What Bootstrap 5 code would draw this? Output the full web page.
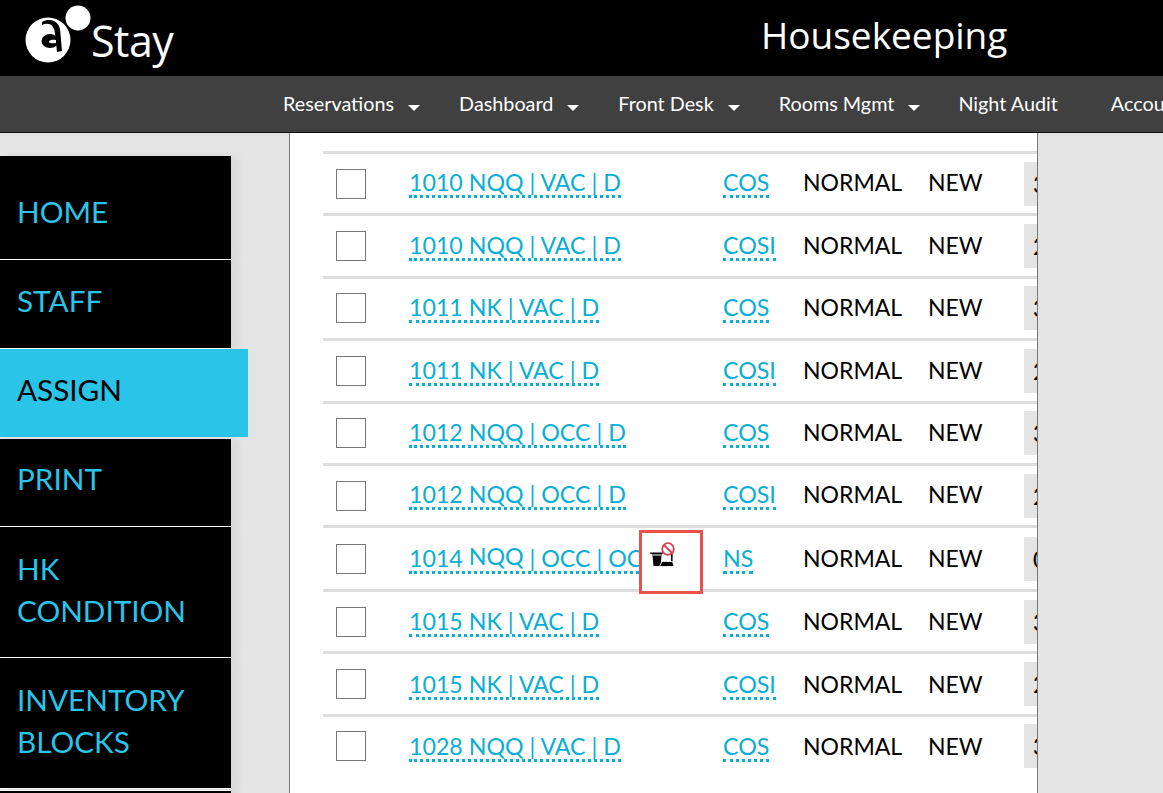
<!DOCTYPE html>
<html lang="en"><head><meta charset="utf-8"><title>Housekeeping</title>
<link href="https://cdn.jsdelivr.net/npm/bootstrap@5.3.0/dist/css/bootstrap.min.css" rel="stylesheet">
<style>
html,body{height:793px;overflow:hidden}
body{background:#e4e4e4;font-family:Lato,"Liberation Sans",sans-serif;color:#000}
.top-strip{height:76px;background:#000;color:#fff}
.logo-box{width:283px;padding:5px 0 0 25px}
.logo-name{font-family:"Open Sans",sans-serif;font-size:43px;line-height:1;margin:14px 0 0 0;letter-spacing:-.5px}
.page-name{font-family:"Open Sans",sans-serif;font-size:37px;line-height:1;margin:0 0 0 478px;padding-top:16px}
.menu-strip{height:57px;background:#404040;border-bottom:1px solid #111;padding:0 0 0 283px;overflow:hidden}
.menu-entry{color:#fff;font-size:19.800px;white-space:nowrap;text-decoration:none}
.menu-caret{display:inline-block;border-top:6px solid #fff;border-left:6px solid transparent;border-right:6px solid transparent;margin-left:14px;vertical-align:0}
.ms-menu-a{margin-left:39px}.ms-menu-b{margin-left:39px}.ms-menu-c{margin-left:39px}.ms-menu-d{margin-left:38px}.ms-menu-e{margin-left:53px}
.work-area{height:660px;overflow:hidden}
.side-col{width:248px;padding-top:23px;flex:none}
.side-item{display:block;width:231px;background:#000;color:#29c4e8;font-size:29.700px;line-height:42px;padding:0 17px;text-decoration:none;border-bottom:1px solid #fff}
.side-one{height:104px;padding-top:35px}
.side-two{height:89px;padding-top:20px}
.side-tall{height:131px;padding-top:20.500px}
.side-print{height:88px;padding-top:19px}
.side-active{width:248px;background:#29c4e8;color:#000;height:88px;padding-top:20px;border-bottom:0;margin:0 0 2px}
.side-shadow{box-shadow:7px 0 7px rgba(0,0,0,.05)}
.side-rest{height:60px;border-top:1px solid #fff;border-bottom:0;margin-top:1px}
.sheet{width:749px;margin-left:41px;background:#fff;border-left:1px solid #777;border-right:1px solid #777;padding:18px 0 0 33px;overflow:hidden;flex:none}
.hk-row{height:62.4px;border-top:3px solid #ddd;font-size:23px;white-space:nowrap;position:relative;padding-bottom:2px}
.hk-row.hk-wide{height:63.6px}
.hk-check{width:30px;height:30px;border:1px solid #777;background:#fff;margin:2px 0 0 13px;flex:none}
.hk-room{width:314px;margin-left:43px;flex:none}
.hk-svc{width:80px;flex:none}
.hk-link{font-size:23.200px;color:#08aed3;text-decoration:none;border-bottom:3px dotted #08aed3;line-height:26px;display:inline-block}
.hk-lift{vertical-align:2px}
.hk-pri{width:125px;flex:none}
.hk-state{width:96px;flex:none}
.hk-num{background:#e4e4e4;width:60px;height:44px;line-height:44px;padding-left:9px;flex:none;margin-top:2px}
.hk-low{padding-bottom:0}
.hk-low .hk-check,.hk-low .hk-num{margin-top:0}
.flag-box{position:absolute;left:316px;top:2px;width:64px;height:64px;border:3px solid #e9524a;background:#fff;z-index:2}
.flag-box svg{position:absolute;left:6px;top:8px}
</style></head>
<body>
<header class="top-strip d-flex">
  <div class="logo-box d-flex">
    <svg width="66" height="60" viewBox="0 0 66 60"><circle cx="23" cy="35" r="22.500" fill="#fff"/><circle cx="53" cy="13" r="12.500" fill="#fff"/><path d="M17 17C24 13 33 15 35 24L37 46 32 47 30 28C29 20 24 17 17 20z" fill="#000"/><ellipse cx="25" cy="36" rx="8.500" ry="7" fill="#000"/><path d="M24 36c2-1.500 5-1.500 7-1v3c-2 .5-5 .5-7-.5z" fill="#fff"/></svg>
    <div class="logo-name">Stay</div>
  </div>
  <h1 class="page-name fw-normal">Housekeeping</h1>
</header>
<nav class="menu-strip d-flex align-items-center">
  <a class="menu-entry" href="#">Reservations<span class="menu-caret"></span></a>
  <a class="menu-entry ms-menu-a" href="#">Dashboard<span class="menu-caret"></span></a>
  <a class="menu-entry ms-menu-b" href="#">Front Desk<span class="menu-caret"></span></a>
  <a class="menu-entry ms-menu-c" href="#">Rooms Mgmt<span class="menu-caret"></span></a>
  <a class="menu-entry ms-menu-d" href="#">Night Audit</a>
  <a class="menu-entry ms-menu-e" href="#">Accounting</a>
</nav>
<main class="work-area d-flex">
  <aside class="side-col">
    <a class="side-item side-shadow side-one" href="#">HOME</a>
    <a class="side-item side-shadow side-two" href="#">STAFF</a>
    <a class="side-item side-active" href="#">ASSIGN</a>
    <a class="side-item side-shadow side-print" href="#">PRINT</a>
    <a class="side-item side-shadow side-tall" href="#">HK CONDITION</a>
    <a class="side-item side-shadow side-tall" href="#">INVENTORY BLOCKS</a>
    <div class="side-item side-shadow side-rest"></div>
  </aside>
  <section class="sheet">
    <div class="hk-row d-flex align-items-center"><div class="hk-check"></div><div class="hk-room"><a class="hk-link" href="#">1010 NQQ | VAC | D</a></div><div class="hk-svc"><a class="hk-link" href="#">COS</a></div><div class="hk-pri">NORMAL</div><div class="hk-state">NEW</div><div class="hk-num">3</div></div>
    <div class="hk-row d-flex align-items-center"><div class="hk-check"></div><div class="hk-room"><a class="hk-link" href="#">1010 NQQ | VAC | D</a></div><div class="hk-svc"><a class="hk-link" href="#">COSI</a></div><div class="hk-pri">NORMAL</div><div class="hk-state">NEW</div><div class="hk-num">2</div></div>
    <div class="hk-row d-flex align-items-center"><div class="hk-check"></div><div class="hk-room"><a class="hk-link" href="#">1011 NK | VAC | D</a></div><div class="hk-svc"><a class="hk-link" href="#">COS</a></div><div class="hk-pri">NORMAL</div><div class="hk-state">NEW</div><div class="hk-num">3</div></div>
    <div class="hk-row d-flex align-items-center"><div class="hk-check"></div><div class="hk-room"><a class="hk-link" href="#">1011 NK | VAC | D</a></div><div class="hk-svc"><a class="hk-link" href="#">COSI</a></div><div class="hk-pri">NORMAL</div><div class="hk-state">NEW</div><div class="hk-num">2</div></div>
    <div class="hk-row d-flex align-items-center"><div class="hk-check"></div><div class="hk-room"><a class="hk-link" href="#">1012 NQQ | OCC | D</a></div><div class="hk-svc"><a class="hk-link" href="#">COS</a></div><div class="hk-pri">NORMAL</div><div class="hk-state">NEW</div><div class="hk-num">3</div></div>
    <div class="hk-row d-flex align-items-center"><div class="hk-check"></div><div class="hk-room"><a class="hk-link" href="#">1012 NQQ | OCC | D</a></div><div class="hk-svc"><a class="hk-link" href="#">COSI</a></div><div class="hk-pri">NORMAL</div><div class="hk-state">NEW</div><div class="hk-num">2</div></div>
    <div class="hk-row hk-wide hk-low d-flex align-items-center"><div class="hk-check"></div><div class="hk-room"><a class="hk-link" href="#">1014 <span class="hk-lift">NQQ</span> | OCC | OCC</a></div><div class="hk-svc"><a class="hk-link" href="#">NS</a></div><div class="hk-pri">NORMAL</div><div class="hk-state">NEW</div><div class="hk-num">0</div>
      <div class="flag-box"><svg width="30" height="30" viewBox="0 0 30 30"><path d="M2 11.500h13v1.200h-1.300L12.500 25h-7L4.300 12.700H2z" fill="#000"/><path d="M4.600 13.600h8.800l-.1 1H4.700z" fill="#fff"/><path d="M23 12h1.600v9.500H23z" fill="#000"/><path d="M11.500 25.500l2.500-5h10.500l1.500 5z" fill="#000" stroke="#fff" stroke-width=".8"/><circle cx="20" cy="8" r="5.800" fill="#fff" stroke="#d9404a" stroke-width="1.800"/><path d="M16 4l8 8" stroke="#d9404a" stroke-width="1.800"/></svg></div></div>
    <div class="hk-row hk-low d-flex align-items-center"><div class="hk-check"></div><div class="hk-room"><a class="hk-link" href="#">1015 NK | VAC | D</a></div><div class="hk-svc"><a class="hk-link" href="#">COS</a></div><div class="hk-pri">NORMAL</div><div class="hk-state">NEW</div><div class="hk-num">3</div></div>
    <div class="hk-row hk-low d-flex align-items-center"><div class="hk-check"></div><div class="hk-room"><a class="hk-link" href="#">1015 NK | VAC | D</a></div><div class="hk-svc"><a class="hk-link" href="#">COSI</a></div><div class="hk-pri">NORMAL</div><div class="hk-state">NEW</div><div class="hk-num">2</div></div>
    <div class="hk-row hk-low d-flex align-items-center"><div class="hk-check"></div><div class="hk-room"><a class="hk-link" href="#">1028 NQQ | VAC | D</a></div><div class="hk-svc"><a class="hk-link" href="#">COS</a></div><div class="hk-pri">NORMAL</div><div class="hk-state">NEW</div><div class="hk-num">3</div></div>
  </section>
</main>
<script src="https://cdn.jsdelivr.net/npm/bootstrap@5.3.0/dist/js/bootstrap.bundle.min.js"></script>
</body></html>
